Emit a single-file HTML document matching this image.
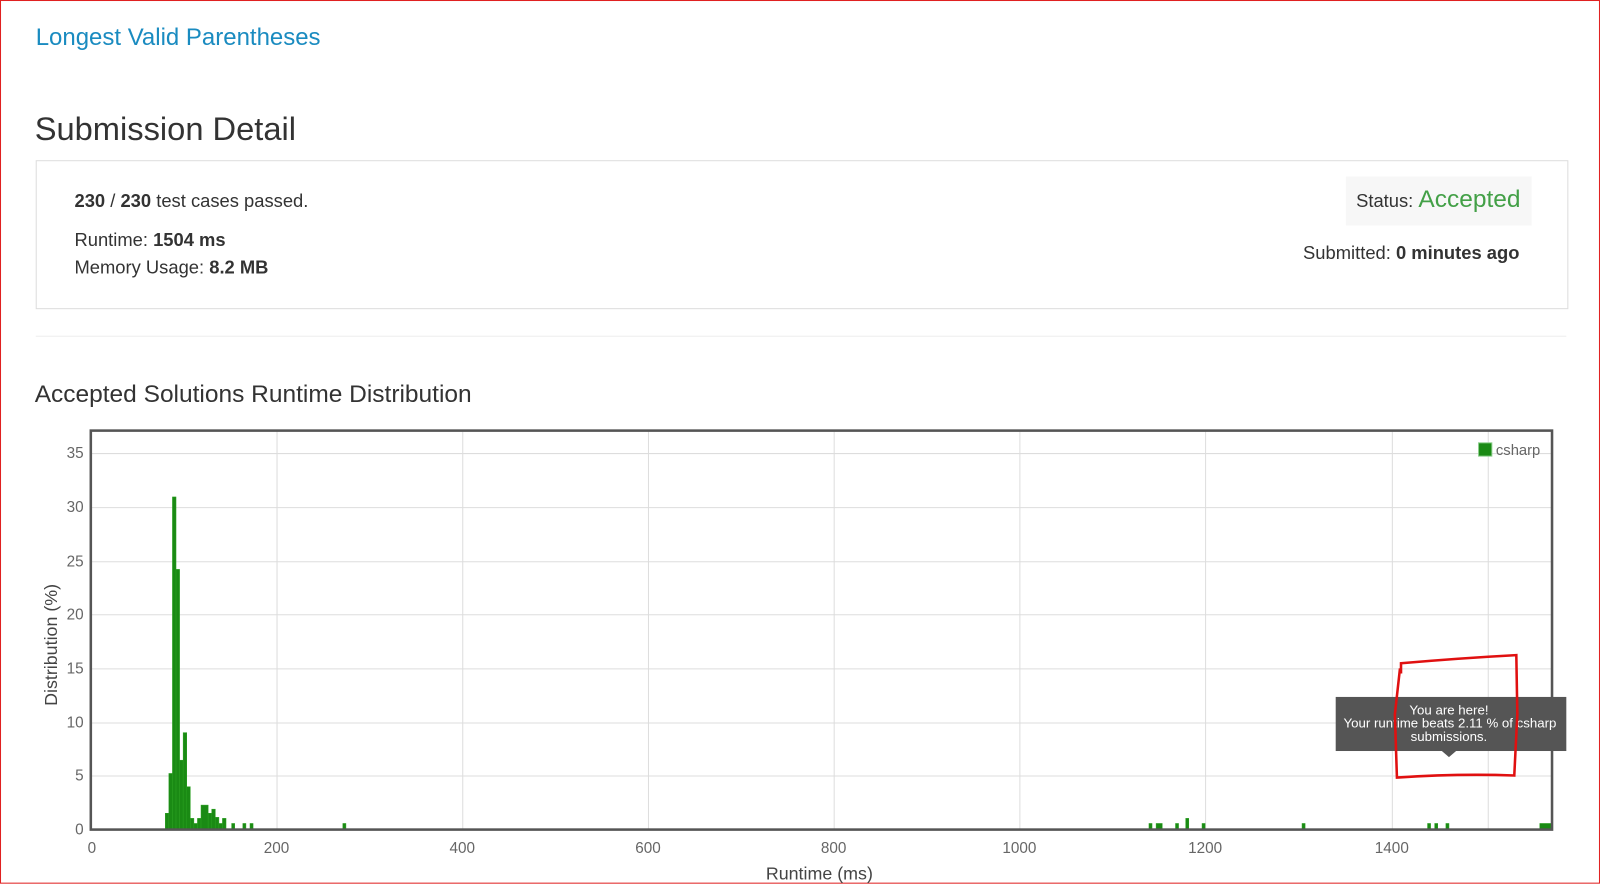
<!DOCTYPE html>
<html><head><meta charset="utf-8"><style>
body{margin:0;width:1600px;height:884px;overflow:hidden;background:#fff;font-family:"Liberation Sans",sans-serif;color:#333;}
#w{position:absolute;left:0;top:0;width:1568px;height:866px;transform:scale(1.0204);transform-origin:0 0;}
.frame{position:absolute;left:0;top:0;width:1566px;height:864px;border:1px solid #e02020;}
.t{position:absolute;white-space:nowrap;}
</style></head><body><div id="w">
<div class="frame"></div>
<div class="t" style="left:35px;top:23px;font-size:23.5px;color:#1a8bc0">Longest Valid Parentheses</div>
<div class="t" style="left:34px;top:108px;font-size:32px;color:#333">Submission Detail</div>
<div style="position:absolute;left:35px;top:157px;width:1500px;height:144px;border:1px solid #ddd"></div>
<div class="t" style="left:73px;top:187px;font-size:18px"><b>230</b> / <b>230</b> test cases passed.</div>
<div class="t" style="left:73px;top:225px;font-size:18px">Runtime: <b>1504 ms</b></div>
<div class="t" style="left:73px;top:252px;font-size:18px">Memory Usage: <b>8.2 MB</b></div>
<div style="position:absolute;left:1319px;top:173px;width:182px;height:48px;background:#f7f7f7"></div>
<div class="t" style="left:1329px;top:182px;font-size:18px">Status: <span style="color:#43a047;font-size:24px">Accepted</span></div>
<div class="t" style="left:1277px;top:238px;font-size:18px">Submitted: <b>0 minutes ago</b></div>
<div style="position:absolute;left:35px;top:329px;width:1500px;height:1px;background:#eee"></div>
<div class="t" style="left:34px;top:373px;font-size:24px">Accepted Solutions Runtime Distribution</div>
<svg style="position:absolute;left:0;top:0" width="1568" height="866">
<g stroke="#ddd" stroke-width="1">
<line x1="89" x2="1521" y1="444.5" y2="444.5"/><line x1="89" x2="1521" y1="497.5" y2="497.5"/><line x1="89" x2="1521" y1="550.5" y2="550.5"/><line x1="89" x2="1521" y1="602.5" y2="602.5"/><line x1="89" x2="1521" y1="655.5" y2="655.5"/><line x1="89" x2="1521" y1="708.5" y2="708.5"/><line x1="89" x2="1521" y1="760.5" y2="760.5"/>
<line x1="271.5" x2="271.5" y1="422" y2="813"/><line x1="453.5" x2="453.5" y1="422" y2="813"/><line x1="635.5" x2="635.5" y1="422" y2="813"/><line x1="817.5" x2="817.5" y1="422" y2="813"/><line x1="999.5" x2="999.5" y1="422" y2="813"/><line x1="1181.5" x2="1181.5" y1="422" y2="813"/><line x1="1364.5" x2="1364.5" y1="422" y2="813"/><line x1="1458.5" x2="1458.5" y1="422" y2="813"/>
</g>
<g fill="#1a8a14" stroke="#2aa020" stroke-width="0.5">
<rect x="162" y="797" width="3.5" height="16"/><rect x="165.5" y="758" width="3.5" height="55"/><rect x="169" y="487" width="3.5" height="326"/><rect x="172.5" y="558" width="3.5" height="255"/><rect x="176" y="745" width="3.5" height="68"/><rect x="179.5" y="718" width="3.5" height="95"/><rect x="183" y="771" width="3.5" height="42"/><rect x="186.5" y="802" width="3.5" height="11"/><rect x="190" y="807" width="3.5" height="6"/><rect x="193.5" y="802" width="3.5" height="11"/><rect x="197" y="789" width="7" height="24"/><rect x="204" y="797" width="3.5" height="16"/><rect x="207.5" y="793" width="3.5" height="20"/><rect x="211" y="801" width="3.5" height="12"/><rect x="214.5" y="807" width="3.5" height="6"/><rect x="218" y="802" width="3.5" height="11"/><rect x="227" y="807" width="3" height="6"/><rect x="238" y="807" width="3" height="6"/><rect x="245" y="807" width="3" height="6"/>
<rect x="336" y="807" width="3" height="6"/><rect x="1126" y="807" width="3" height="6"/><rect x="1133" y="807" width="6" height="6"/><rect x="1152" y="807" width="3" height="6"/><rect x="1162" y="802" width="3" height="11"/><rect x="1178" y="807" width="3" height="6"/><rect x="1276" y="807" width="3" height="6"/><rect x="1399" y="807" width="3" height="6"/><rect x="1406" y="807" width="3" height="6"/><rect x="1417" y="807" width="3" height="6"/><rect x="1509" y="807" width="11" height="6"/>
</g>
<rect x="89" y="422" width="1432" height="391" fill="none" stroke="#555" stroke-width="2.5"/>
<rect x="1449" y="434" width="13" height="13" fill="#1a8a14" stroke="#8c8" stroke-width="1"/>
<text x="1466" y="446" font-size="14.5" fill="#666" font-family="Liberation Sans">csharp</text>
<g font-size="15" fill="#666" font-family="Liberation Sans" text-anchor="end">
<text x="82" y="449">35</text><text x="82" y="502">30</text><text x="82" y="555">25</text><text x="82" y="607">20</text><text x="82" y="660">15</text><text x="82" y="713">10</text><text x="82" y="765">5</text><text x="82" y="818">0</text></g>
<g font-size="15" fill="#666" font-family="Liberation Sans" text-anchor="middle">
<text x="90" y="836">0</text><text x="271" y="836">200</text><text x="453" y="836">400</text><text x="635" y="836">600</text><text x="817" y="836">800</text><text x="999" y="836">1000</text><text x="1181" y="836">1200</text><text x="1364" y="836">1400</text></g>
<text x="803" y="862" font-size="17.5" fill="#444" text-anchor="middle" font-family="Liberation Sans">Runtime (ms)</text>
<text transform="translate(56,632) rotate(-90)" font-size="17.5" fill="#444" text-anchor="middle" font-family="Liberation Sans">Distribution (%)</text>
<rect x="1309" y="683" width="226" height="53" fill="#555"/>
<path d="M1413 736 L1427 736 L1420 742 Z" fill="#555"/>
<g font-size="13" fill="#fff" text-anchor="middle" font-family="Liberation Sans">
<text x="1420" y="700">You are here!</text><text x="1421" y="713">Your runtime beats 2.11 % of csharp</text><text x="1420" y="726">submissions.</text></g>
<path d="M1373 660 L1373 650 Q1430 645 1486 642 L1487 700 L1484 760 Q1430 758 1369 762 L1367 700 L1372 655" fill="none" stroke="#e01010" stroke-width="2.5"/>
</svg>
</div></body></html>
